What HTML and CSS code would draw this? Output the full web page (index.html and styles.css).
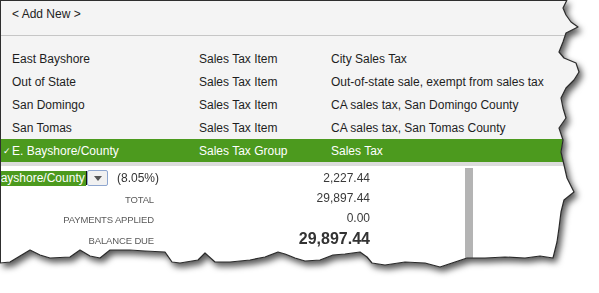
FILE: index.html
```html
<!DOCTYPE html>
<html>
<head>
<meta charset="utf-8">
<link rel="stylesheet" href="styles.css">
</head>
<body>
<div class="frame">
  <div class="sheet">
    <div class="list">
      <div class="addnew">&lt; Add New &gt;</div>
      <div class="rows">
        <div class="row"><span class="chk"></span><span class="c1">East Bayshore</span><span class="c2">Sales Tax Item</span><span class="c3">City Sales Tax</span></div>
        <div class="row"><span class="chk"></span><span class="c1">Out of State</span><span class="c2">Sales Tax Item</span><span class="c3">Out-of-state sale, exempt from sales tax</span></div>
        <div class="row"><span class="chk"></span><span class="c1">San Domingo</span><span class="c2">Sales Tax Item</span><span class="c3">CA sales tax, San Domingo County</span></div>
        <div class="row"><span class="chk"></span><span class="c1">San Tomas</span><span class="c2">Sales Tax Item</span><span class="c3">CA sales tax, San Tomas County</span></div>
        <div class="row sel"><span class="chk">&#10003;</span><span class="c1">E. Bayshore/County</span><span class="c2">Sales Tax Group</span><span class="c3">Sales Tax</span></div>
      </div>
    </div>
    <div class="band"></div>
    <div class="summary">
      <div class="totals">
        <div class="line l1">
          <div class="lbl lead">
            <div class="combo">
              <div class="ctext"><span class="hl">E. Bayshore/County</span></div>
              <span class="caret"></span>
              <div class="btn"><svg width="8" height="5" viewBox="0 0 8 5"><polygon points="0,0 8,0 4,5" fill="#555"/></svg></div>
            </div>
            <span class="pct">(8.05%)</span>
          </div>
          <div class="amt">2,227.44</div>
        </div>
        <div class="line l2"><div class="lbl">TOTAL</div><div class="amt">29,897.44</div></div>
        <div class="line l3"><div class="lbl">PAYMENTS APPLIED</div><div class="amt">0.00</div></div>
        <div class="line l4"><div class="lbl">BALANCE DUE</div><div class="amt big">29,897.44</div></div>
      </div>
      <div class="scroll"></div>
    </div>
  </div>
  <svg class="edge" width="599" height="293" viewBox="0 0 599 293">
    <polyline fill="none" stroke="#2a2a2a" stroke-width="1.2" stroke-linejoin="round"
      points="567,0 563,8 566,15 571,22 578,27 566,33 563,42 559,52 564,58 576,63 579,72 574,80 566,88 561,98 563,108 566,118 559,128 563,140 561,152 564,165 567,178 574,192 564,200 561,212 559,228 557,242 553,258 540,256 525,258 505,257 485,258 467,258 455,262 440,267 425,263 405,262 385,265 372,263 367,257 360,252 345,254 333,255 320,260 305,261 295,258 285,254 278,252 265,257 250,260 230,262 215,262 205,253 198,260 180,263 172,262 165,252 145,251 130,250 110,250 100,258 90,256 80,250 70,257 50,258 40,255 30,250 20,256 10,262 0,263"/>
  </svg>
</div>
</body>
</html>
```

FILE: styles.css
```css
html, body {
  margin: 0;
  padding: 0;
  background: #ffffff;
}

body {
  font-family: "Liberation Sans", Arial, sans-serif;
  width: 599px;
  height: 293px;
  overflow: hidden;
}

.frame {
  position: relative;
  width: 599px;
  height: 293px;
  filter: drop-shadow(3px 4px 3px rgba(0, 0, 0, 0.65));
}

.sheet {
  width: 599px;
  height: 293px;
  box-sizing: border-box;
  border-top: 1px solid #2e2e2e;
  border-left: 1px solid #2e2e2e;
  background: #ffffff;
  display: flex;
  flex-direction: column;
  clip-path: polygon(0 0, 567px 0, 563px 8px, 566px 15px, 571px 22px, 578px 27px, 566px 33px, 563px 42px, 559px 52px, 564px 58px, 576px 63px, 579px 72px, 574px 80px, 566px 88px, 561px 98px, 563px 108px, 566px 118px, 559px 128px, 563px 140px, 561px 152px, 564px 165px, 567px 178px, 574px 192px, 564px 200px, 561px 212px, 559px 228px, 557px 242px, 553px 258px, 540px 256px, 525px 258px, 505px 257px, 485px 258px, 467px 258px, 455px 262px, 440px 267px, 425px 263px, 405px 262px, 385px 265px, 372px 263px, 367px 257px, 360px 252px, 345px 254px, 333px 255px, 320px 260px, 305px 261px, 295px 258px, 285px 254px, 278px 252px, 265px 257px, 250px 260px, 230px 262px, 215px 262px, 205px 253px, 198px 260px, 180px 263px, 172px 262px, 165px 252px, 145px 251px, 130px 250px, 110px 250px, 100px 258px, 90px 256px, 80px 250px, 70px 257px, 50px 258px, 40px 255px, 30px 250px, 20px 256px, 10px 262px, 0 263px);
}

.edge {
  position: absolute;
  left: 0;
  top: 0;
  pointer-events: none;
}

.list {
  background: #f4f4f4;
}

.addnew {
  height: 34px;
  line-height: 26px;
  padding-left: 11px;
  font-size: 12px;
  color: #222;
  border-bottom: 1px solid #c6c6c6;
}

.rows {
  padding-top: 11px;
}

.row {
  display: flex;
  height: 23px;
  line-height: 24px;
  font-size: 12px;
  color: #1e1e1e;
  white-space: nowrap;
}

.chk {
  width: 11px;
  font-size: 9px;
  text-align: center;
}

.c1 { width: 187px; }
.c2 { width: 132px; }
.c3 { flex: 1; }

.row.sel {
  background: #4c9a1e;
  color: #ffffff;
}

.band {
  height: 4px;
  background: #dcdcdc;
}

.summary {
  flex: 1;
  display: flex;
  background: #ffffff;
}

.totals {
  width: 369px;
  padding-top: 3px;
}

.line {
  display: flex;
  align-items: center;
  white-space: nowrap;
}

.l1 { height: 18px; }
.l2 { height: 21px; }
.l3 { height: 20px; }
.l4 { height: 22px; }

.lbl {
  width: 153px;
  text-align: right;
  font-size: 9.5px;
  letter-spacing: -0.15px;
  color: #5a5a5a;
  padding-top: 3px;
}

.lbl.lead {
  display: flex;
  align-items: center;
  text-align: left;
  padding-top: 0;
  letter-spacing: 0;
}

.combo {
  display: flex;
  align-items: center;
  height: 17px;
}

.ctext {
  width: 85px;
  overflow: hidden;
  font-size: 12px;
  line-height: 15px;
}

.hl {
  display: inline-block;
  margin-left: -23px;
  background: #4c9a1e;
  color: #ffffff;
  padding-right: 1px;
}

.caret {
  width: 1px;
  height: 14px;
  background: #111;
}

.btn {
  width: 21px;
  height: 16px;
  box-sizing: border-box;
  border: 1px solid #8ea6cf;
  border-radius: 2px;
  background: #f1f1f1;
  display: flex;
  align-items: center;
  justify-content: center;
}

.pct {
  margin-left: 9px;
  font-size: 12px;
  color: #333;
}

.amt {
  width: 216px;
  text-align: right;
  font-size: 12px;
  color: #3a3a3a;
}

.amt.big {
  font-size: 16px;
  font-weight: bold;
  color: #333;
}

.scroll {
  margin-left: 95px;
  margin-top: 2px;
  width: 8px;
  background: #b4b4b4;
}
```
